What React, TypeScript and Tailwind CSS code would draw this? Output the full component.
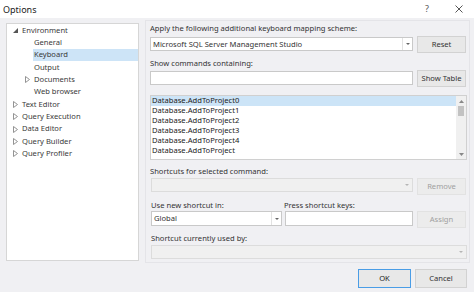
const font = { fontFamily: '"Noto Sans", "Open Sans", sans-serif' };

function Arrow({ open }: { open?: boolean }) {
    // tree expander glyph
    return open ? (
        <svg width="5" height="5" viewBox="0 0 5 5" className="shrink-0">
            <path d="M5 0 L5 5 L0 5 Z" fill="#555" />
        </svg>
    ) : (
        <svg width="5" height="7" viewBox="0 0 5 7" className="shrink-0">
            <path d="M0.5 0.5 L4.5 3.5 L0.5 6.5 Z" fill="none" stroke="#888" strokeWidth="0.9" />
        </svg>
    )
}

function TreeRow({ label, level, arrow, selected }: { label: string; level: number; arrow?: 'open' | 'closed'; selected?: boolean }) {
    return (
        <div className="flex items-center h-[12.3px] relative">
            <div className={level === 0 ? "w-[14px] flex justify-end pr-[3px]" : "w-[26px] flex justify-end pr-[3px]"}>
                {arrow && <Arrow open={arrow === 'open'} />}
            </div>
            <div className={selected ? "flex-1 h-full flex items-center bg-[#cde4f7] pl-[1px]" : "flex-1 h-full flex items-center pl-[1px]"}>
                {label}
            </div>
        </div>
    )
}

function Combo({ w, text, disabled, h = 14 }: { w: number; text?: string; disabled?: boolean; h?: number }) {
    return (
        <div
            className={disabled ? "flex items-center border border-[#dcdcdc] bg-[#f0f0f0]" : "flex items-center border border-[#c9c9c9] bg-white"}
            style={{ width: w, height: h }}
        >
            <div className="flex-1 pl-[2px] whitespace-nowrap leading-[11px]">{text}</div>
            <div className={disabled ? "w-[10px] h-full flex items-center justify-center" : "w-[10px] h-full flex items-center justify-center border-l border-[#e2e2e2]"}>
                <svg width="4" height="2" viewBox="0 0 4 2"><path d="M0 0 L4 0 L2 2 Z" fill={disabled ? "#b5b5b5" : "#666"} /></svg>
            </div>
        </div>
    )
}

function Btn({ label, disabled, w = 49, h = 17, primary }: { label: string; disabled?: boolean; w?: number; h?: number; primary?: boolean }) {
    return (
        <div
            className={
                primary
                    ? "flex items-center justify-center border border-[#4a9de6] bg-[#e8e8e8] text-[#222]"
                    : disabled
                        ? "flex items-center justify-center border border-[#e2e2e2] bg-[#ececec] text-[#a0a0a0]"
                        : "flex items-center justify-center border border-[#d2d2d2] bg-[#e8e8e8] text-[#333]"
            }
            style={{ width: w, height: h }}
        >
            {label}
        </div>
    )
}

export default function App() {
    const commands = ["Database.AddToProject0", "Database.AddToProject1", "Database.AddToProject2", "Database.AddToProject3", "Database.AddToProject4", "Database.AddToProject"]
    return (
        <div className="w-[474px] h-[292px] overflow-hidden bg-[#f0f0f3] text-[7.6px] text-[#333] leading-none" style={font}>
            {/* title bar */}
            <div className="h-[18px] bg-white flex items-center relative">
                <span className="pl-[3px] text-[9px] text-[#222]">Options</span>
                <span className="absolute left-[425px] top-[4px] text-[9px] text-[#555]">?</span>
                <svg className="absolute left-[455px] top-[5px]" width="8" height="8" viewBox="0 0 8 8">
                    <path d="M0.5 0.5 L7.5 7.5 M7.5 0.5 L0.5 7.5" stroke="#444" strokeWidth="0.9" />
                </svg>
            </div>

            <div className="flex pl-[6px] pt-[2px]">
                {/* tree */}
                <div className="mt-[3px] w-[133px] h-[238px] bg-white border border-[#d6d6d6] pt-[0.5px] text-[#3a3a3a]">
                    <TreeRow label="Environment" level={0} arrow="open" />
                    <TreeRow label="General" level={1} />
                    <TreeRow label="Keyboard" level={1} selected />
                    <TreeRow label="Output" level={1} />
                    <TreeRow label="Documents" level={1} arrow="closed" />
                    <TreeRow label="Web browser" level={1} />
                    <TreeRow label="Text Editor" level={0} arrow="closed" />
                    <TreeRow label="Query Execution" level={0} arrow="closed" />
                    <TreeRow label="Data Editor" level={0} arrow="closed" />
                    <TreeRow label="Query Builder" level={0} arrow="closed" />
                    <TreeRow label="Query Profiler" level={0} arrow="closed" />
                </div>

                {/* keyboard page */}
                <div className="ml-[6px] w-[325px] h-[243px] border border-[#e4e4e8] pl-[4px] pt-[3px] flex flex-col">
                    <div className="h-[10px] flex items-center">Apply the following additional keyboard mapping scheme:</div>
                    <div className="mt-[2px] flex items-start gap-[4px]">
                        <div className="mt-[1px]"><Combo w={263} text="Microsoft SQL Server Management Studio" /></div>
                        <Btn label="Reset" />
                    </div>

                    <div className="mt-[6px] h-[10px] flex items-center">Show commands containing:</div>
                    <div className="mt-[1px] flex items-start gap-[4px]">
                        <div className="mt-[1px] w-[263px] h-[14px] bg-white border border-[#c9c9c9]" />
                        <Btn label="Show Table" />
                    </div>

                    <div className="mt-[8px] w-[317px] h-[65px] bg-white border border-[#d0d0d0] flex">
                        <div className="flex-1 flex flex-col">
                            {commands.map((c, i) => (
                                <div key={c} className={i === 0 ? "h-[10px] flex items-center pl-[1px] bg-[#cce4f7] text-[#222]" : "h-[10px] flex items-center pl-[1px] text-[#222]"}>
                                    {c}
                                </div>
                            ))}
                        </div>
                        <div className="w-[10px] bg-[#f0f0f0] flex flex-col items-center">
                            <div className="h-[10px] flex items-center">
                                <svg width="5" height="3" viewBox="0 0 5 3"><path d="M0 3 L5 3 L2.5 0 Z" fill="#888" /></svg>
                            </div>
                            <div className="w-[6px] h-[10px] bg-[#c2c2c2]" />
                            <div className="flex-1" />
                            <div className="h-[10px] flex items-center">
                                <svg width="5" height="3" viewBox="0 0 5 3"><path d="M0 0 L5 0 L2.5 3 Z" fill="#888" /></svg>
                            </div>
                        </div>
                    </div>

                    <div className="mt-[7px] h-[10px] flex items-center">Shortcuts for selected command:</div>
                    <div className="mt-[1px] flex items-start gap-[4px]">
                        <div className="ml-[1px]"><Combo w={262} disabled /></div>
                        <Btn label="Remove" disabled />
                    </div>

                    <div className="mt-[6px] h-[10px] flex items-center">
                        <span className="w-[134px] pl-[1px]">Use new shortcut in:</span>
                        <span>Press shortcut keys:</span>
                    </div>
                    <div className="mt-[0px] flex items-start gap-[4px]">
                        <div className="ml-[1px] flex gap-[3px]">
                            <Combo w={131} h={15} text="Global" />
                            <div className="w-[128px] h-[15px] bg-white border border-[#c9c9c9]" />
                        </div>
                        <Btn label="Assign" disabled />
                    </div>

                    <div className="mt-[6px] h-[10px] flex items-center pl-[1px]">Shortcut currently used by:</div>
                    <div className="mt-[1px] ml-[1px]"><Combo w={316} disabled /></div>
                </div>
            </div>

            {/* bottom buttons */}
            <div className="flex justify-end gap-[4px] pr-[7px] pt-[6px]">
                <Btn label="OK" primary w={53} h={19} />
                <Btn label="Cancel" w={52} h={19} />
            </div>
        </div>
    )
}
